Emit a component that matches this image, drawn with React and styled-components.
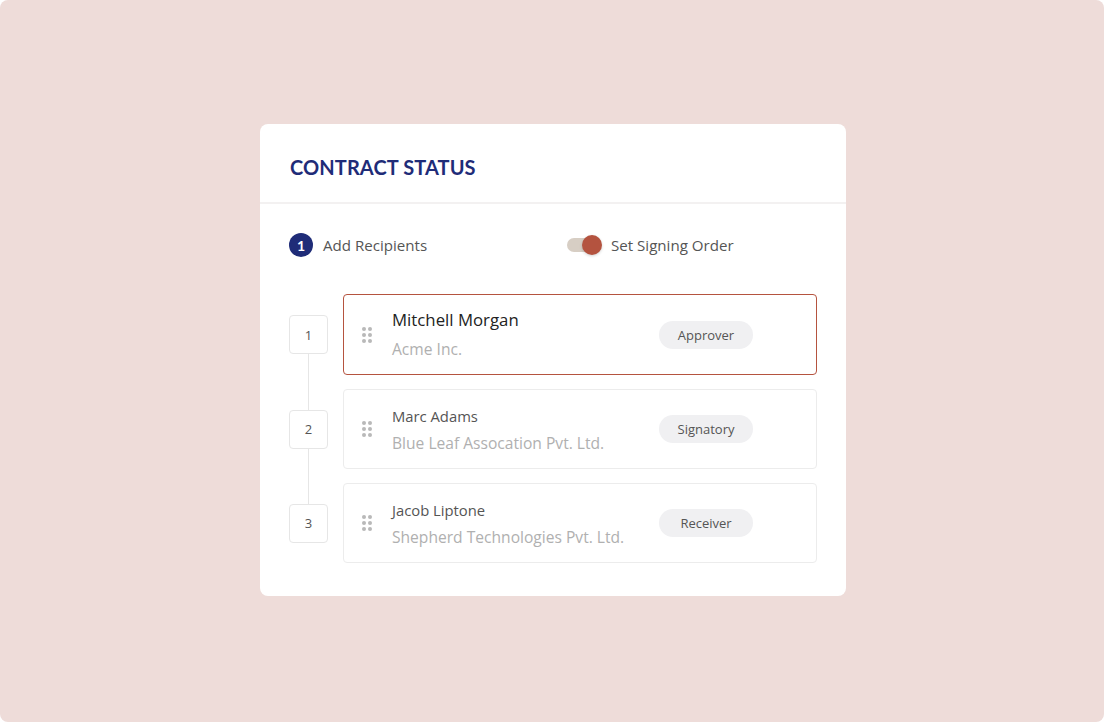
import React from "react";
import styled, { createGlobalStyle } from "styled-components";

const Global = createGlobalStyle`
  html, body { margin: 0; padding: 0; background: #ffffff; }
  body { font-family: "Open Sans", Lato, sans-serif; -webkit-font-smoothing: antialiased; }
  * { box-sizing: border-box; }
`;

const Page = styled.div`
  width: 1104px;
  height: 722px;
  background: #eedcd9;
  border-radius: 8px;
  display: flex;
  align-items: center;
  justify-content: center;
  padding: 0 0 2px 2px;
`;

const Card = styled.div`
  width: 586px;
  height: 472px;
  background: #ffffff;
  border-radius: 8px;
  display: flex;
  flex-direction: column;
`;

const Header = styled.div`
  height: 80px;
  padding: 7px 30px 0 30px;
  display: flex;
  align-items: center;
  border-bottom: 2px solid #f3f1f1;
`;

const Title = styled.h1`
  margin: 0;
  font-family: Lato, sans-serif;
  font-weight: 700;
  font-size: 20px;
  letter-spacing: 0.1px;
  color: #1f2c78;
`;

const Body = styled.div`
  padding: 28px 29px 32px 29px;
  display: flex;
  flex-direction: column;
`;

const StepRow = styled.div`
  display: grid;
  grid-template-columns: 278px 1fr;
  align-items: center;
  height: 26px;
`;

const Step = styled.div`
  display: flex;
  align-items: center;
  gap: 10px;
  font-size: 15.1px;
  color: #555555;
`;

const StepCircle = styled.span`
  width: 24px;
  height: 24px;
  border-radius: 50%;
  background: #1f2c78;
  color: #fff;
  font-family: Lato, sans-serif;
  font-weight: 700;
  font-size: 14px;
  display: flex;
  align-items: center;
  justify-content: center;
`;

const ToggleTrack = styled.span`
  position: relative;
  width: 30px;
  height: 14px;
  border-radius: 7px;
  background: #d7cec4;
  margin-right: 4px;
`;

const ToggleKnob = styled.span`
  position: absolute;
  right: -5px;
  top: -3px;
  width: 20px;
  height: 20px;
  border-radius: 50%;
  background: #b4533f;
  box-shadow: 0 1px 3px rgba(0, 0, 0, 0.18);
`;

const List = styled.div`
  margin-top: 36px;
  position: relative;
  display: flex;
  flex-direction: column;
  gap: 14px;
`;

const Connector = styled.div`
  position: absolute;
  left: 19px;
  top: 40px;
  bottom: 40px;
  width: 1px;
  background: #e6e6e6;
`;

const Row = styled.div`
  display: flex;
  align-items: center;
  gap: 15px;
`;

const NumBox = styled.div`
  position: relative;
  width: 39px;
  height: 39px;
  flex: none;
  border: 1px solid #e6e6e6;
  border-radius: 4px;
  background: #fff;
  display: flex;
  align-items: center;
  justify-content: center;
  font-size: 13px;
  color: #555;
`;

const RecipientCard = styled.div`
  flex: 1;
  height: ${(p) => (p.$active ? "81px" : "80px")};
  border: 1px solid ${(p) => (p.$active ? "#b5533f" : "#ececec")};
  border-radius: 4px;
  display: flex;
  align-items: center;
  padding: 0 63px 0 18px;
`;

const Handle = styled.span`
  display: grid;
  grid-template-columns: repeat(2, 4px);
  grid-auto-rows: 4px;
  gap: 2px;
  margin-right: 20px;
  span {
    width: 4px;
    height: 4px;
    border-radius: 50%;
    background: #b9b9b9;
  }
`;

const Info = styled.div`
  flex: 1;
  display: flex;
  flex-direction: column;
  gap: ${(p) => (p.$active ? "9px" : "7px")};
`;

const Name = styled.div`
  font-size: ${(p) => (p.$active ? "16.8px" : "14.8px")};
  color: ${(p) => (p.$active ? "#222222" : "#555555")};
  line-height: 20px;
`;

const Company = styled.div`
  font-size: 15.6px;
  color: #b0b0b0;
  line-height: 20px;
`;

const Pill = styled.span`
  width: 94px;
  height: 28px;
  border-radius: 14px;
  background: #f0f0f2;
  color: #555;
  font-size: 13px;
  display: flex;
  align-items: center;
  justify-content: center;
`;

const recipients = [
  { n: 1, name: "Mitchell Morgan", company: "Acme Inc.", role: "Approver", active: true },
  { n: 2, name: "Marc Adams", company: "Blue Leaf Assocation Pvt. Ltd.", role: "Signatory" },
  { n: 3, name: "Jacob Liptone", company: "Shepherd Technologies Pvt. Ltd.", role: "Receiver" },
];

export default function App() {
  return (
    <>
      <Global />
      <Page>
        <Card>
          <Header>
            <Title>CONTRACT STATUS</Title>
          </Header>
          <Body>
            <StepRow>
              <Step>
                <StepCircle>1</StepCircle>
                Add Recipients
              </Step>
              <Step>
                <ToggleTrack>
                  <ToggleKnob />
                </ToggleTrack>
                Set Signing Order
              </Step>
            </StepRow>
            <List>
              <Connector />
              {recipients.map((r) => (
                <Row key={r.n}>
                  <NumBox>{r.n}</NumBox>
                  <RecipientCard $active={r.active}>
                    <Handle>
                      <span /><span /><span /><span /><span /><span />
                    </Handle>
                    <Info $active={r.active}>
                      <Name $active={r.active}>{r.name}</Name>
                      <Company>{r.company}</Company>
                    </Info>
                    <Pill>{r.role}</Pill>
                  </RecipientCard>
                </Row>
              ))}
            </List>
          </Body>
        </Card>
      </Page>
    </>
  );
}
